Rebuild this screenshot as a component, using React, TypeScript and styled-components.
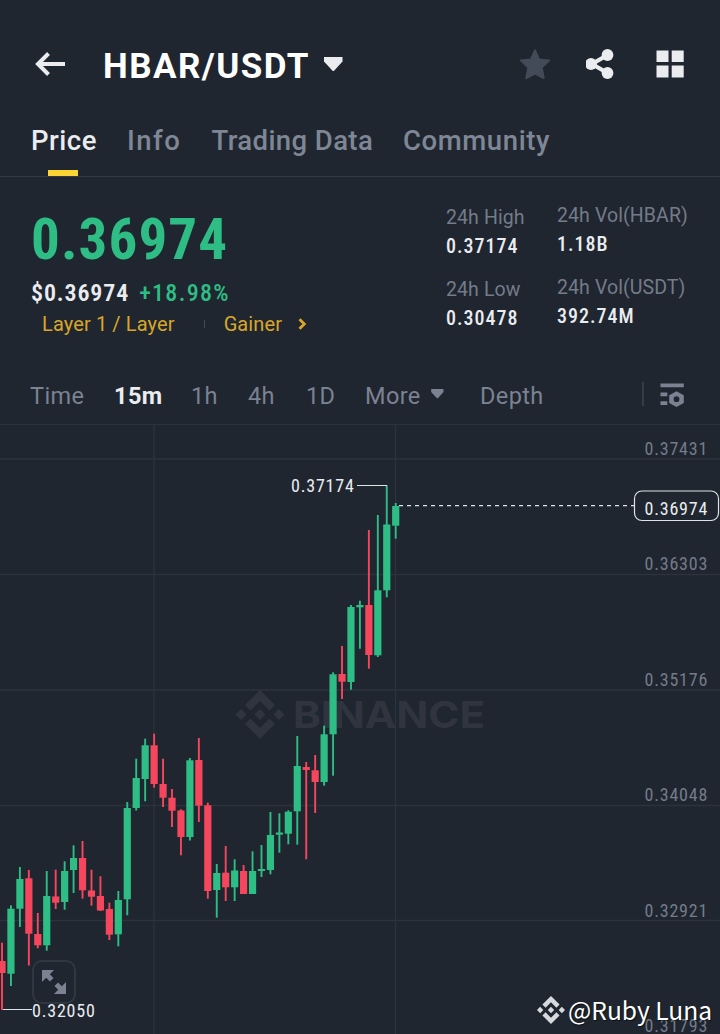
import React from "react";
import styled, { createGlobalStyle } from "styled-components";

const GlobalStyle = createGlobalStyle`
  * { box-sizing: border-box; }
  body { margin: 0; background: #1f262f; font-family: Roboto, "Liberation Sans", sans-serif; }
`;

const GREEN = "#2ebd85";
const RED = "#f6465d";

const Page = styled.main`
  width: 720px;
  height: 1034px;
  display: flex;
  flex-direction: column;
  overflow: hidden;
  background: #1f262f;
  color: #eaecef;
`;

const Header = styled.header`
  height: 104px;
  padding: 40px 34px 13px 34px;
  display: flex;
  align-items: center;
`;

const BackIcon = styled.svg`
  width: 32px;
  height: 26px;
  margin: 0 37px 3px 0;
`;

const Pair = styled.h1`
  margin: 2px 0 0;
  color: #fff;
  font-size: 35px;
  font-weight: 700;
  letter-spacing: 1.45px;
  line-height: 50px;
  white-space: nowrap;
`;

const PairCaret = styled.svg`
  width: 19px;
  height: 15px;
  margin: 0 auto 3px 14px;
`;

const Actions = styled.div`
  display: flex;
  align-items: center;
  gap: 34px;
  margin-bottom: 3px;
`;

const ActionIcon = styled.svg<{ $w: number }>`
  width: ${(p) => p.$w}px;
  height: 32px;
`;

const Tabs = styled.nav`
  height: 73px;
  padding-left: 31px;
  display: grid;
  grid-template-columns: 96px 84.5px 191.5px 1fr;
  border-bottom: 1px solid #333a45;
`;

const Tab = styled.a<{ $active?: boolean; $spacing: number }>`
  display: flex;
  flex-direction: column;
  font-size: 27.5px;
  font-weight: 480;
  line-height: 74px;
  letter-spacing: ${(p) => p.$spacing}px;
  white-space: nowrap;
  color: ${(p) => (p.$active ? "#eaecef" : "#7f8695")};
`;

const Underline = styled.span`
  width: 30px;
  height: 6px;
  margin: -8px 0 0 17px;
  background: #fcd535;
`;

const Market = styled.section`
  height: 189px;
  display: flex;
`;

const Quote = styled.div`
  width: 446px;
  padding: 32px 0 0 31px;
`;

const LastPrice = styled.div`
  color: ${GREEN};
  font-size: 57px;
  font-weight: 680;
  font-stretch: 75%;
  letter-spacing: 1.1px;
  line-height: 61px;
`;

const SubPrice = styled.div`
  display: flex;
  gap: 10px;
  margin-top: 10px;
  font-size: 24px;
  font-weight: 600;
  font-stretch: 80%;
  line-height: 26px;
  letter-spacing: 0.85px;
`;

const Change = styled.span`
  color: ${GREEN};
  font-weight: 500;
  letter-spacing: 1.3px;
`;

const Tags = styled.div`
  display: flex;
  align-items: center;
  height: 28px;
  margin-top: 4px;
  padding-left: 11px;
  color: #d9a629;
  font-size: 20px;
  line-height: 28px;
  letter-spacing: 0.12px;
`;

const TagDivider = styled.span`
  width: 1px;
  height: 8px;
  margin: 0 19px 0 29px;
  background: #434a57;
`;

const Chevron = styled.svg`
  width: 9px;
  height: 12px;
  margin-left: 16px;
`;

const StatColumn = styled.dl<{ $top: number; $width: number }>`
  width: ${(p) => p.$width}px;
  margin: 0;
  padding-top: ${(p) => p.$top}px;
  display: flex;
  flex-direction: column;
  gap: 15.5px;
`;

const StatLabel = styled.dt`
  color: #747b89;
  font-size: 19.5px;
  line-height: 28px;
  letter-spacing: 0.1px;
  white-space: nowrap;
`;

const StatValue = styled.dd`
  margin: 0;
  font-size: 20px;
  font-weight: 460;
  font-stretch: 82%;
  line-height: 28.5px;
  letter-spacing: 1px;
`;

const Intervals = styled.nav`
  height: 59px;
  padding: 1px 0 0 30px;
  display: grid;
  grid-template-columns: 84px 77px 57px 58px 59px 115px 162px 1fr;
  border-bottom: 1px solid #2b323d;
`;

const Interval = styled.a<{ $active?: boolean }>`
  display: flex;
  align-items: center;
  gap: 10px;
  font-size: 23.5px;
  font-stretch: ${(p) => (p.$active ? 90 : 93)}%;
  letter-spacing: 0.4px;
  font-weight: ${(p) => (p.$active ? 700 : 400)};
  color: ${(p) => (p.$active ? "#eaecef" : "#7b8291")};
`;

const MoreCaret = styled.svg`
  width: 13px;
  height: 10px;
  margin-bottom: 4px;
`;

const IndicatorSlot = styled.div`
  display: flex;
  align-items: center;
  gap: 16px;
`;

const SlotDivider = styled.span`
  width: 1.5px;
  height: 24px;
  margin-bottom: 3px;
  background: #353c48;
`;

const Chart = styled.section`
  position: relative;
  flex: 1;
`;

const Plot = styled.svg`
  display: block;
  width: 720px;
  height: 609px;
`;

const AxisText = styled.text`
  font-family: Roboto, sans-serif;
  font-size: 18px;
  font-stretch: 82%;
  letter-spacing: 0.8px;
  fill: #747b89;
`;

const MarkText = styled(AxisText)`
  font-weight: 450;
  fill: #eaecef;
`;

const Watermark = styled.text`
  font-family: Inter, sans-serif;
  font-size: 37.5px;
  font-weight: 700;
`;

const ExpandButton = styled.button`
  position: absolute;
  left: 32px;
  top: 535px;
  width: 44px;
  height: 44px;
  padding: 0;
  border: 2px solid #303743;
  border-radius: 10px;
  background: rgba(31, 38, 47, 0.7);
`;

const Author = styled.div`
  position: absolute;
  left: 537px;
  top: 566px;
  display: flex;
  align-items: center;
  gap: 3px;
  color: #fff;
  font-family: "Noto Sans CJK SC", "Noto Sans", sans-serif;
  font-size: 24.6px;
  line-height: 36px;
  white-space: nowrap;
  text-shadow: 1px 1px 1px rgba(0, 0, 0, 0.6);
`;

const AuthorLogo = styled.svg`
  width: 28px;
  height: 28px;
  margin-top: 2px;
  fill: #d6d9dd;
`;

const LOGO =
  "M16.624 13.9202l2.7175 2.7154-7.353 7.353-7.353-7.352 2.7175-2.7164 4.6355 4.6595 4.6356-4.6595zm4.6366-4.6366L24 12l-2.7154 2.7164L18.5682 12l2.6924-2.7164zm-9.272.001l2.7163 2.6914-2.7164 2.7174v-.001L9.2721 12l2.7164-2.7154zm-9.2722-.001L5.4088 12l-2.6914 2.6924L0 12l2.7164-2.7164zM11.9885.0115l7.353 7.329-2.7174 2.7154-4.6356-4.6356-4.6355 4.6595-2.7174-2.7154 7.353-7.353z";

// Direction, high, body top, body bottom, low, in plot coordinates.
type Candle = ["u" | "d", number, number, number, number];
const candles: Candle[] = [
  ["d", 942.7, 961, 973, 1010],
  ["u", 905.3, 908.7, 973.7, 986],
  ["u", 867, 879, 908.7, 927],
  ["d", 870, 878.3, 933.7, 965.5],
  ["d", 913, 934, 945.3, 948.3],
  ["u", 871, 896, 945.3, 950.7],
  ["d", 869.7, 896.5, 902.7, 909],
  ["u", 861.3, 871, 902, 909.7],
  ["u", 845.3, 858, 870, 893],
  ["d", 841, 858, 890.3, 898.7],
  ["d", 869.7, 890.5, 896.7, 905.7],
  ["d", 876.3, 896, 910.5, 911],
  ["d", 902.7, 909, 934.7, 940],
  ["u", 891, 900, 934.3, 946.3],
  ["u", 802, 808, 899.3, 915.3],
  ["u", 758.7, 778, 808, 810.5],
  ["u", 738.7, 745.3, 779, 801.3],
  ["d", 733.7, 745.3, 784, 787.7],
  ["d", 758.7, 784, 797.7, 807],
  ["d", 789, 797.7, 810.7, 827],
  ["d", 809.3, 810.5, 837, 855.3],
  ["u", 758, 760.3, 837, 840.5],
  ["d", 738, 760, 805.7, 822],
  ["d", 802.7, 805.3, 891, 898.7],
  ["u", 864, 873, 890, 917.7],
  ["d", 846, 872.7, 887.3, 901],
  ["u", 859.3, 870.5, 887.3, 901],
  ["d", 865, 871, 894, 894],
  ["u", 851.3, 871, 894, 894],
  ["u", 845, 869, 871, 877],
  ["u", 812, 835, 870, 874.3],
  ["u", 813.3, 832.5, 834.7, 852.7],
  ["u", 810.3, 811.7, 833.7, 844.3],
  ["u", 736, 766, 811.3, 844.7],
  ["d", 762, 767, 770, 859.3],
  ["d", 755, 770.3, 782, 813],
  ["u", 725.7, 734.3, 782, 785.7],
  ["u", 672.3, 674.3, 734.3, 775.7],
  ["d", 646, 674, 681.7, 699],
  ["u", 605, 607, 682, 689.7],
  ["u", 600.7, 605, 607.3, 648.7],
  ["d", 530, 605, 655, 668.7],
  ["u", 515, 590.3, 655.3, 657],
  ["u", 485.3, 524.5, 590.3, 597.3],
  ["u", 503, 506, 525.7, 538.7],
];

const axis: [string, number][] = [
  ["0.37431", 455],
  ["0.36303", 570],
  ["0.35176", 686],
  ["0.34048", 801],
  ["0.32921", 917],
  ["0.31793", 1032],
];

const gridRows = [459, 574.5, 690, 805.5, 920.5];
const gridCols = [154, 395.5];

function Stat({ label, value }: { label: string; value: string }) {
  return (
    <div>
      <StatLabel>{label}</StatLabel>
      <StatValue>{value}</StatValue>
    </div>
  );
}

export default function App() {
  return (
    <Page>
      <GlobalStyle />
      <Header>
        <BackIcon viewBox="0 0 32 26" fill="none" stroke="#eaecef" strokeWidth="4">
          <path d="M31 13H4M14.5 2.5L4 13l10.5 10.5" />
        </BackIcon>
        <Pair>HBAR/USDT</Pair>
        <PairCaret viewBox="0 0 19 15" fill="#eaecef">
          <path d="M0 0h18.500v4.500l-8.200 9q-1 1-2 0l-8.300-9z" />
        </PairCaret>
        <Actions>
          <ActionIcon $w={32} viewBox="1 0 32 32" fill="#434b59" stroke="#434b59" strokeWidth="2" strokeLinejoin="round">
            <path d="M16 2.300l4 9.200 10.200.9-7.500 7.200 2 10.400L16 25.500 7.300 30l2-10.400L1.800 12.400 12 11.500z" />
          </ActionIcon>
          <ActionIcon $w={30} viewBox="2.500 0 30 32" fill="#eaecef">
            <path d="M24 7L8.500 16l15.500 9" fill="none" stroke="#eaecef" strokeWidth="4.200" />
            <circle cx="24" cy="7" r="5.900" />
            <circle cx="7.500" cy="16" r="5.900" />
            <circle cx="24" cy="25" r="5.900" />
          </ActionIcon>
          <ActionIcon $w={36} viewBox="0 0 36 32" fill="#eaecef">
            <path d="M6.500 2.500h12v11.500h-12zM21.700 2.500h12v11.500h-12zM6.500 17.500h12v12h-12zM21.700 17.500h12v12h-12z" />
          </ActionIcon>
        </Actions>
      </Header>

      <Tabs>
        <Tab $active $spacing={0.5}>
          Price
          <Underline />
        </Tab>
        <Tab $spacing={1.5}>Info</Tab>
        <Tab $spacing={0.4}>Trading Data</Tab>
        <Tab $spacing={0.6}>Community</Tab>
      </Tabs>

      <Market>
        <Quote>
          <LastPrice>0.36974</LastPrice>
          <SubPrice>
            <span>$0.36974</span>
            <Change>+18.98%</Change>
          </SubPrice>
          <Tags>
            <span>Layer 1 / Layer</span>
            <TagDivider />
            <span>Gainer</span>
            <Chevron viewBox="0 0 9 12" fill="none" stroke="#d9a629" strokeWidth="2.800">
              <path d="M1.500 1.200L6.300 6 1.500 10.800" />
            </Chevron>
          </Tags>
        </Quote>
        <StatColumn $top={27} $width={111}>
          <Stat label="24h High" value="0.37174" />
          <Stat label="24h Low" value="0.30478" />
        </StatColumn>
        <StatColumn $top={24.500} $width={163}>
          <Stat label="24h Vol(HBAR)" value="1.18B" />
          <Stat label="24h Vol(USDT)" value="392.74M" />
        </StatColumn>
      </Market>

      <Intervals>
        <Interval>Time</Interval>
        <Interval $active>15m</Interval>
        <Interval>1h</Interval>
        <Interval>4h</Interval>
        <Interval>1D</Interval>
        <Interval>
          More
          <MoreCaret viewBox="0 0 19 15" fill="#7b8291">
            <path d="M0 0h18.500v4.500l-8.200 9q-1 1-2 0l-8.300-9z" />
          </MoreCaret>
        </Interval>
        <Interval>Depth</Interval>
        <IndicatorSlot>
          <SlotDivider />
          <svg width="25" height="26" viewBox="0 0 25 26" fill="#7b8291">
            <path d="M.5 .5h23.300v3.800H.5zM.5 9.500h6.800v3.800H.5zM.5 18.300h6.800v3.800H.5z" />
            <path
              fillRule="evenodd"
              d="M16.500 8.300l7.300 4v7.800l-7.300 4-7.300-4v-7.800zM16.500 13.300a2.900 2.900 0 100 5.800 2.900 2.900 0 000-5.800z"
            />
          </svg>
        </IndicatorSlot>
      </Intervals>

      <Chart>
        <Plot viewBox="0 425 720 609">
          <g stroke="#2c333d" strokeWidth="1.300">
            {gridRows.map((y) => (
              <line key={y} x1="0" x2="720" y1={y} y2={y} />
            ))}
            {gridCols.map((x) => (
              <line key={x} x1={x} x2={x} y1="425" y2="1034" />
            ))}
          </g>
          <g fill="#2f343e">
            <path d={LOGO} transform="translate(235.500 690) scale(2.040)" />
            <Watermark x="293" y="728" textLength="192" lengthAdjust="spacingAndGlyphs">
              BINANCE
            </Watermark>
          </g>
          {candles.map(([dir, high, top, bottom, low], i) => {
            const x = 2 + i * 8.948;
            return (
              <g key={i} fill={dir === "u" ? GREEN : RED}>
                <rect x={x - 0.95} y={high} width="1.900" height={low - high} />
                <rect x={x - 3.6} y={top} width="7.200" height={bottom - top} />
              </g>
            );
          })}
          <g stroke="#dfe2e6" strokeWidth="1.200" fill="none">
            <path d="M357 485.500h30M3 1009.500h29" />
            <path d="M399 505.700h235" strokeDasharray="4 4" />
            <rect x="634.500" y="491" width="84" height="29.500" rx="7.500" fill="#1f262f" />
          </g>
          {axis.map(([label, y]) => (
            <AxisText key={label} x="644.500" y={y}>
              {label}
            </AxisText>
          ))}
          <MarkText x="644.500" y="514.500">0.36974</MarkText>
          <MarkText x="291" y="492">0.37174</MarkText>
          <MarkText x="32" y="1017">0.32050</MarkText>
        </Plot>
        <ExpandButton aria-label="Full screen">
          <svg width="40" height="40" viewBox="0 0 40 40" fill="#7b8291">
            <path d="M8 8h12l-4.200 4.200 3.700 3.700-3.600 3.600-3.700-3.700L8 20zM32 32H20l4.200-4.200-3.700-3.700 3.600-3.600 3.700 3.700L32 20z" />
          </svg>
        </ExpandButton>
        <Author>
          <AuthorLogo viewBox="0 0 24 24">
            <path d={LOGO} />
          </AuthorLogo>
          @Ruby Luna
        </Author>
      </Chart>
    </Page>
  );
}
